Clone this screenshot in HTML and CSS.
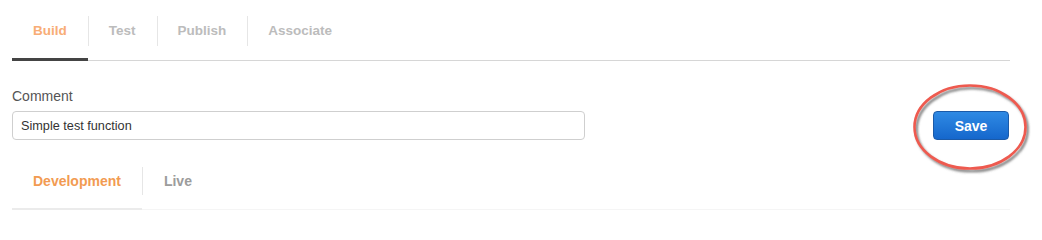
FILE: index.html
```html
<!DOCTYPE html>
<html>
<head>
<meta charset="utf-8">
<link rel="stylesheet" href="styles.css">
</head>
<body>
<div class="page">
  <ul class="tabs">
    <li class="tab active"><span class="tab-label">Build</span></li>
    <li class="tab"><span class="tab-label sep">Test</span></li>
    <li class="tab"><span class="tab-label sep">Publish</span></li>
    <li class="tab"><span class="tab-label sep">Associate</span></li>
  </ul>
  <div class="form-row">
    <div class="field">
      <label class="field-label" for="comment">Comment</label>
      <input id="comment" class="field-input" type="text" value="Simple test function">
    </div>
    <div class="save-wrap">
      <button class="save-btn">Save</button>
      <svg class="callout" width="121" height="92" viewBox="0 0 121 92">
        <defs>
          <filter id="sh" x="-10%" y="-10%" width="130%" height="130%">
            <feDropShadow dx="2" dy="2.5" stdDeviation="1.3" flood-color="#555" flood-opacity="0.75"/>
          </filter>
        </defs>
        <ellipse cx="58" cy="44" rx="55.5" ry="41.5" fill="none" stroke="#ee5a4f" stroke-width="2.6" filter="url(#sh)"/>
      </svg>
    </div>
  </div>
  <ul class="subtabs">
    <li class="subtab active"><span class="subtab-label">Development</span></li>
    <li class="subtab"><span class="subtab-label sep">Live</span></li>
  </ul>
</div>
</body>
</html>
```

FILE: styles.css
```css
html, body {
  margin: 0;
  padding: 0;
  background: #ffffff;
}

body {
  font-family: "Liberation Sans", Arial, Helvetica, sans-serif;
  color: #333;
}

.page {
  padding-left: 12px;
  width: 998px;
}

.tabs {
  list-style: none;
  margin: 0;
  padding: 0;
  display: flex;
  border-bottom: 1px solid #d6d6d6;
}

.tab {
  padding: 16px 0 15px;
  margin-bottom: -1px;
}

.tab.active {
  padding-bottom: 12px;
  border-bottom: 3px solid #444;
}

.tab-label {
  display: block;
  padding: 0 21px;
  height: 30px;
  line-height: 30px;
  font-size: 13.5px;
  font-weight: bold;
  color: #bcbcbc;
}

.tab.active .tab-label {
  color: #f8ad76;
}

.sep {
  border-left: 1px solid #e6e6e6;
  padding-left: 20px;
}

.form-row {
  display: flex;
  justify-content: space-between;
  align-items: flex-end;
  margin-top: 26px;
}

.field {
  display: flex;
  flex-direction: column;
}

.field-label {
  font-size: 14px;
  line-height: 18px;
  color: #555;
  margin-bottom: 6px;
}

.field-input {
  box-sizing: border-box;
  width: 573px;
  height: 29px;
  margin: 0;
  padding: 0 8px;
  border: 1px solid #cfcfcf;
  border-radius: 4px;
  font-family: "Liberation Sans", Arial, Helvetica, sans-serif;
  font-size: 12.7px;
  color: #333;
  outline: none;
}

.save-wrap {
  position: relative;
  margin-right: 1px;
}

.save-btn {
  display: block;
  box-sizing: border-box;
  width: 76px;
  height: 29px;
  margin: 0;
  padding: 0;
  border: 1px solid #1b5aa8;
  border-radius: 4px;
  background: linear-gradient(#2f8ae4, #1567cc);
  color: #fff;
  font-family: "Liberation Sans", Arial, Helvetica, sans-serif;
  font-size: 14px;
  font-weight: bold;
  cursor: pointer;
}

.callout {
  position: absolute;
  left: -21px;
  top: -28px;
  pointer-events: none;
}

.subtabs {
  list-style: none;
  margin: 0;
  padding: 0;
  display: flex;
  border-bottom: 1px solid #f5f5f5;
}

.subtab {
  padding: 27px 0 15px;
  margin-bottom: -1px;
}

.subtab.active {
  padding-bottom: 13px;
  border-bottom: 2px solid #ebebeb;
}

.subtab-label {
  display: block;
  padding: 0 21px;
  height: 28px;
  line-height: 28px;
  font-size: 14px;
  font-weight: bold;
  color: #9c9c9c;
}

.subtab.active .subtab-label {
  color: #f29b52;
}
```
